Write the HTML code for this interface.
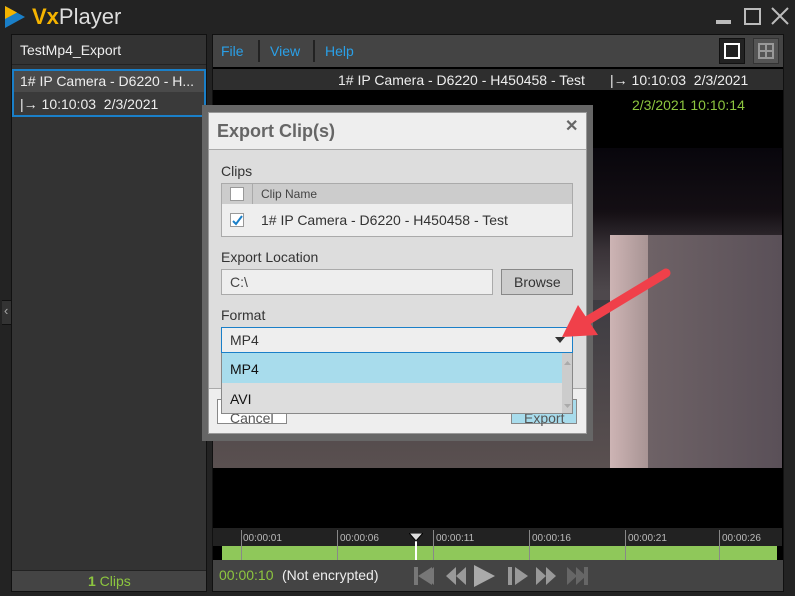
<!DOCTYPE html><html><head><style>
*{box-sizing:border-box;margin:0;padding:0}
body{width:795px;height:596px;background:#232323;font-family:"Liberation Sans",sans-serif;position:relative;overflow:hidden}
.a{position:absolute}
.t{white-space:nowrap}
</style></head><body>
<!-- title -->
<svg class="a" style="left:5px;top:6px" width="22" height="24"><polygon points="0,0 20,11 0,22" fill="#1a7fc8"/><polygon points="0,0 12,6.5 0,13" fill="#f5b400"/></svg>
<div class="a t" style="left:32px;top:4px;font-size:22px;color:#ddd"><b style="color:#f5b400">Vx</b>Player</div>
<div class="a" style="left:716px;top:20px;width:15px;height:4px;background:#bbb"></div>
<div class="a" style="left:744px;top:8px;width:17px;height:17px;border:2px solid #bbb"></div>
<svg class="a" style="left:771px;top:7px" width="18" height="18"><path d="M1 1L17 17M17 1L1 17" stroke="#bbb" stroke-width="2"/></svg>
<!-- left panel -->
<div class="a" style="left:11px;top:34px;width:196px;height:558px;background:#333;border:1px solid #111"></div>
<div class="a" style="left:12px;top:35px;width:194px;height:30px;background:#333;border-bottom:1px solid #222"></div>
<div class="a t" style="left:20px;top:42px;font-size:14px;color:#eee">TestMp4_Export</div>
<div class="a" style="left:12px;top:69px;width:194px;height:48px;border:2px solid #1a7fc8;background:#3a3a3a"></div>
<div class="a" style="left:14px;top:71px;width:190px;height:21px;background:#4a4a4a"></div>
<div class="a t" style="left:20px;top:73px;font-size:14px;color:#eee">1# IP Camera - D6220 - H...</div>
<div class="a t" style="left:20px;top:96px;font-size:14px;color:#eee">|→ 10:10:03&nbsp; 2/3/2021</div>
<div class="a" style="left:2px;top:300px;width:10px;height:25px;background:#333;border:1px solid #111;border-left:none"></div>
<div class="a t" style="left:4px;top:303px;font-size:13px;color:#aaa">‹</div>
<div class="a" style="left:12px;top:570px;width:194px;height:21px;background:#444;border-top:1px solid #222"></div>
<div class="a t" style="left:88px;top:573px;font-size:14px;color:#8dc63f"><b>1</b> Clips</div>
<!-- right panel -->
<div class="a" style="left:212px;top:34px;width:572px;height:558px;background:#000;border:1px solid #111"></div>
<div class="a" style="left:213px;top:35px;width:570px;height:32px;background:#444"></div>
<div class="a t" style="left:221px;top:43px;font-size:14px;color:#2aa0e8">File</div>
<div class="a" style="left:258px;top:40px;width:2px;height:22px;background:#222"></div>
<div class="a t" style="left:270px;top:43px;font-size:14px;color:#2aa0e8">View</div>
<div class="a" style="left:313px;top:40px;width:2px;height:22px;background:#222"></div>
<div class="a t" style="left:325px;top:43px;font-size:14px;color:#2aa0e8">Help</div>
<div class="a" style="left:719px;top:38px;width:26px;height:26px;background:#222;border:1px solid #111"></div>
<div class="a" style="left:724px;top:43px;width:16px;height:16px;border:2px solid #fff"></div>
<div class="a" style="left:753px;top:38px;width:26px;height:26px;background:#555;border:1px solid #333"></div>
<svg class="a" style="left:758px;top:43px" width="16" height="16"><rect x="1" y="1" width="14" height="14" fill="none" stroke="#999" stroke-width="2"/><path d="M8 1V15M1 8H15" stroke="#999" stroke-width="2"/></svg>
<div class="a" style="left:213px;top:69px;width:570px;height:21px;background:#2e2e2e"></div>
<div class="a t" style="left:338px;top:72px;font-size:14px;color:#eee">1# IP Camera - D6220 - H450458 - Test</div>
<div class="a t" style="left:610px;top:72px;font-size:14px;color:#eee">|→ 10:10:03&nbsp; 2/3/2021</div>
<div class="a" style="left:213px;top:148px;width:569px;height:320px;background:linear-gradient(180deg,#08060c 0%,#140f14 20%,#3a3338 32%,#4e484c 45%,#5a5358 100%)"></div>
<div class="a" style="left:213px;top:300px;width:397px;height:168px;background:linear-gradient(180deg,#3e3c42,#5a5050)"></div>
<div class="a" style="left:610px;top:235px;width:38px;height:233px;background:linear-gradient(90deg,#cdb4b4,#a89494)"></div>
<div class="a" style="left:648px;top:235px;width:134px;height:233px;background:linear-gradient(90deg,#6e6266,#5a5058)"></div>
<div class="a t" style="left:632px;top:97px;font-size:14px;color:#8dc63f">2/3/2021 10:10:14</div>
<!-- timeline -->
<div class="a" style="left:213px;top:528px;width:569px;height:18px;background:#222"></div>
<div class="a" style="left:213px;top:546px;width:569px;height:14px;background:#000"></div>
<div class="a" style="left:222px;top:546px;width:555px;height:14px;background:#8fc85a"></div>
<div class="a" style="left:213px;top:560px;width:570px;height:31px;background:#444"></div>
<div class="a t" style="left:243px;top:533px;font-size:10px;color:#bbb">00:00:01</div>
<div class="a t" style="left:340px;top:533px;font-size:10px;color:#bbb">00:00:06</div>
<div class="a t" style="left:436px;top:533px;font-size:10px;color:#bbb">00:00:11</div>
<div class="a t" style="left:532px;top:533px;font-size:10px;color:#bbb">00:00:16</div>
<div class="a t" style="left:628px;top:533px;font-size:10px;color:#bbb">00:00:21</div>
<div class="a t" style="left:722px;top:533px;font-size:10px;color:#bbb">00:00:26</div>
<div class="a" style="left:241px;top:530px;width:1px;height:30px;background:#888"></div>
<div class="a" style="left:337px;top:530px;width:1px;height:30px;background:#888"></div>
<div class="a" style="left:433px;top:530px;width:1px;height:30px;background:#888"></div>
<div class="a" style="left:529px;top:530px;width:1px;height:30px;background:#888"></div>
<div class="a" style="left:625px;top:530px;width:1px;height:30px;background:#888"></div>
<div class="a" style="left:719px;top:530px;width:1px;height:30px;background:#888"></div>
<div class="a" style="left:415px;top:538px;width:2px;height:22px;background:#fff"></div>
<svg class="a" style="left:409px;top:533px" width="14" height="9"><polygon points="0,0 14,0 7,8" fill="#ddd" stroke="#000"/></svg>
<div class="a t" style="left:219px;top:567px;font-size:14px;color:#8dc63f">00:00:10</div>
<div class="a t" style="left:282px;top:567px;font-size:14px;color:#eee">(Not encrypted)</div>
<svg class="a" style="left:412px;top:563px" width="180" height="26" fill="#777">
<rect x="2" y="4" width="4" height="18"/><polygon points="20,4 20,22 6,13"/><polygon points="22,4 22,22 12,13"/>
<polygon points="44,4 44,22 34,13" fill="#999"/><polygon points="54,4 54,22 44,13" fill="#999"/>
<polygon points="62,2 62,24 83,13" fill="#aaa"/>
<rect x="96" y="4" width="4" height="18" fill="#999"/><polygon points="103,4 103,22 116,13" fill="#999"/>
<polygon points="124,4 124,22 134,13" fill="#999"/><polygon points="134,4 134,22 144,13" fill="#999"/>
<polygon points="155,4 155,22 165,13" fill="#666"/><polygon points="164,4 164,22 174,13" fill="#666"/><rect x="172" y="4" width="4" height="18" fill="#666"/>
</svg>
<!-- dialog -->
<div class="a" style="left:202px;top:105px;width:391px;height:336px;background:#666"></div>
<div class="a" style="left:208px;top:112px;width:379px;height:322px;background:#ddd;border:1px solid #999"></div>
<div class="a" style="left:209px;top:113px;width:377px;height:37px;background:#eee;border-bottom:1px solid #aaa"></div>
<div class="a t" style="left:217px;top:121px;font-size:18px;font-weight:bold;color:#666">Export Clip(s)</div>
<div class="a t" style="left:565px;top:116px;font-size:16px;font-weight:bold;color:#666">✕</div>
<div class="a t" style="left:221px;top:163px;font-size:14px;color:#333">Clips</div>
<div class="a" style="left:221px;top:183px;width:352px;height:54px;background:#eee;border:1px solid #aaa"></div>
<div class="a" style="left:222px;top:184px;width:350px;height:20px;background:#ccc"></div>
<div class="a" style="left:252px;top:184px;width:1px;height:20px;background:#aaa"></div>
<div class="a" style="left:230px;top:187px;width:14px;height:14px;background:#fff;border:1px solid #999"></div>
<div class="a t" style="left:261px;top:187px;font-size:12px;color:#444">Clip Name</div>
<div class="a" style="left:230px;top:213px;width:14px;height:14px;background:#fff;border:1px solid #999"></div>
<svg class="a" style="left:231px;top:214px" width="13" height="13"><path d="M2 7L5 10L11 2" fill="none" stroke="#1a7fc8" stroke-width="2"/></svg>
<div class="a t" style="left:261px;top:212px;font-size:14px;color:#333">1# IP Camera - D6220 - H450458 - Test</div>
<div class="a t" style="left:221px;top:249px;font-size:14px;color:#333">Export Location</div>
<div class="a" style="left:221px;top:269px;width:272px;height:26px;background:#eee;border:1px solid #aaa"></div>
<div class="a t" style="left:230px;top:274px;font-size:14px;color:#444">C:\</div>
<div class="a" style="left:501px;top:269px;width:72px;height:26px;background:#ccc;border:1px solid #888"></div>
<div class="a t" style="left:514px;top:274px;font-size:14px;color:#333">Browse</div>
<div class="a t" style="left:221px;top:307px;font-size:14px;color:#333">Format</div>
<div class="a" style="left:209px;top:388px;width:377px;height:45px;background:#eee;border-top:1px solid #aaa"></div>
<div class="a" style="left:217px;top:399px;width:70px;height:25px;background:#fff;border:1px solid #888"></div>
<div class="a t" style="left:230px;top:410px;font-size:14px;color:#555">Cancel</div>
<div class="a" style="left:511px;top:399px;width:66px;height:25px;background:#a8dcec;border:1px solid #888"></div>
<div class="a t" style="left:524px;top:410px;font-size:14px;color:#555">Export</div>
<div class="a" style="left:221px;top:327px;width:352px;height:26px;background:#eee;border:1px solid #1a7fc8"></div>
<div class="a t" style="left:230px;top:332px;font-size:14px;color:#333">MP4</div>
<svg class="a" style="left:555px;top:337px" width="10" height="7"><polygon points="0,0 10,0 5,6" fill="#333"/></svg>
<div class="a" style="left:221px;top:353px;width:352px;height:61px;background:#ddd;border:1px solid #888;border-top:none"></div>
<div class="a" style="left:222px;top:353px;width:340px;height:30px;background:#a8dcec"></div>
<div class="a" style="left:562px;top:353px;width:10px;height:60px;background:#ccc"></div>
<svg class="a" style="left:563px;top:360px" width="9" height="52"><polygon points="1,5 8,5 4.5,1" fill="#aaa"/><polygon points="1,44 8,44 4.5,48" fill="#aaa"/></svg>
<div class="a t" style="left:230px;top:361px;font-size:14px;color:#111">MP4</div>
<div class="a t" style="left:230px;top:391px;font-size:14px;color:#111">AVI</div>
<!-- arrow -->
<svg class="a" style="left:560px;top:265px" width="115" height="80"><path d="M106 8L20 60" stroke="#f0404a" stroke-width="9" stroke-linecap="round"/><polygon points="2,72 18,40 38,70" fill="#f0404a"/></svg>
</body></html>
